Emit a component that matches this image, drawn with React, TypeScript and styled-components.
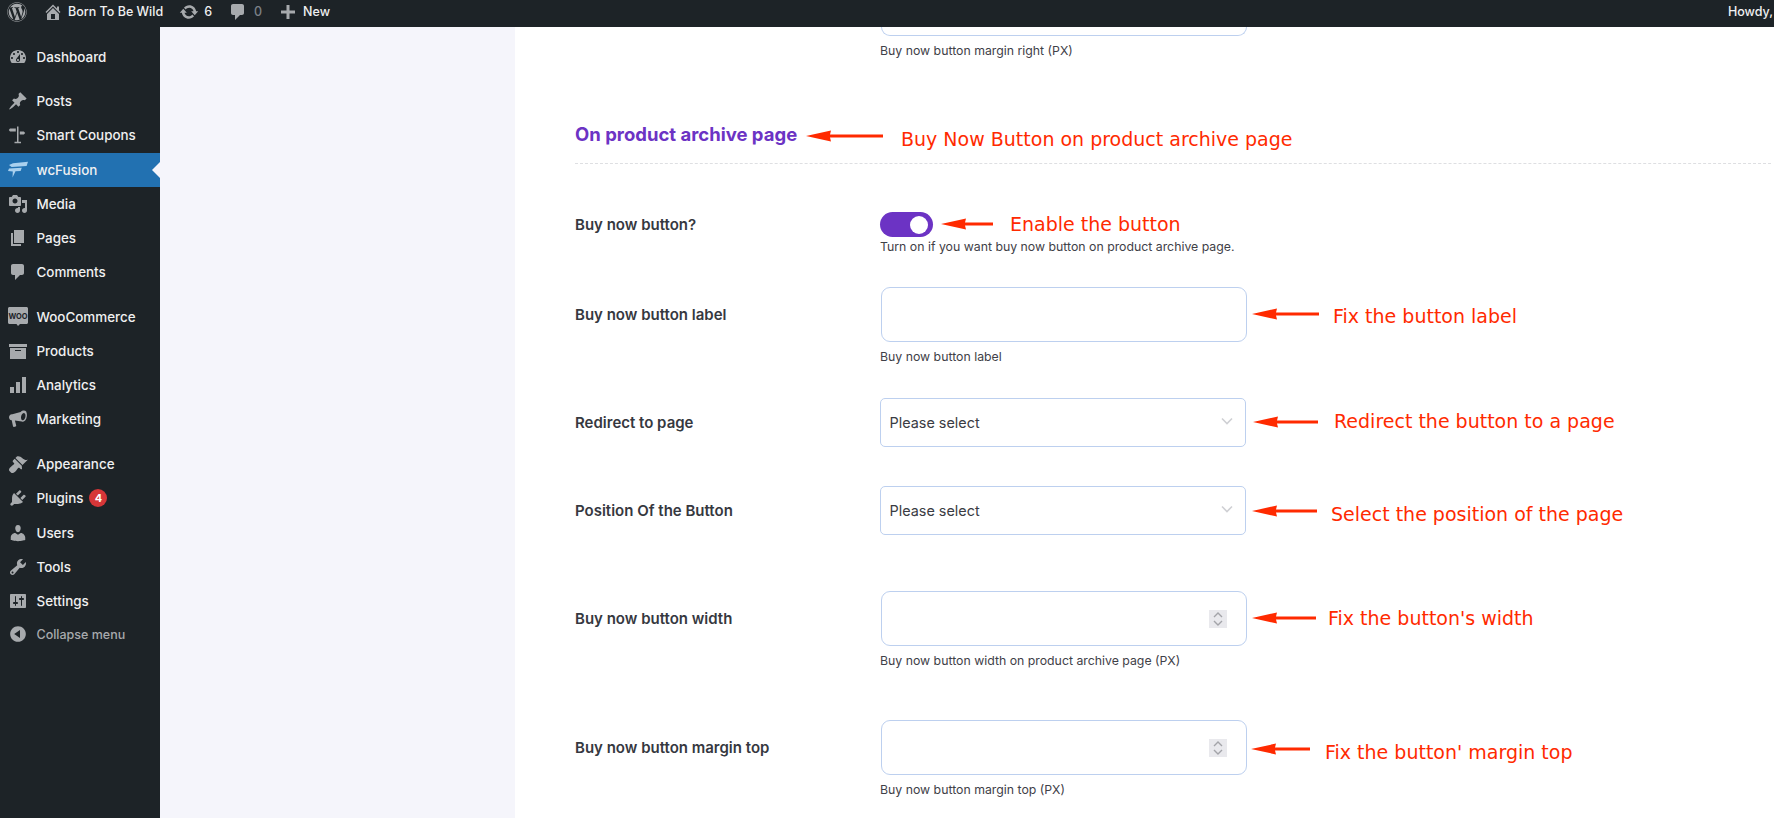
import React from 'react';
import styled, { createGlobalStyle } from 'styled-components';
import { FaWordpress } from 'react-icons/fa';

const GlobalStyle = createGlobalStyle`
  html, body {
    margin: 0;
    padding: 0;
    background: #fff;
  }
  * {
    box-sizing: border-box;
  }
`;

const Page = styled.div`
  width: 1774px;
  height: 818px;
  overflow: hidden;
  display: flex;
  flex-direction: column;
  font-family: Inter, "Liberation Sans", sans-serif;
`;

const AdminBar = styled.header`
  height: 27px;
  flex: none;
  background: #1d2327;
  color: #f0f0f1;
  display: flex;
  align-items: center;
  font-size: 12.5px;
  font-weight: 500;
  padding-left: 7px;
  padding-bottom: 4px;
`;

const BarIcon = styled.svg<{ $size?: number; $left: number }>`
  width: ${p => p.$size ?? 20}px;
  height: ${p => p.$size ?? 20}px;
  margin-left: ${p => p.$left}px;
  flex: none;
  fill: #a7aaad;
`;

const LogoSlot = styled.span`
  display: flex;
  color: #a7aaad;
  font-size: 20px;
`;

const BarText = styled.span<{ $left: number; $dim?: boolean }>`
  margin-left: ${p => p.$left}px;
  color: ${p => (p.$dim ? '#7b8086' : '#f0f0f1')};
  white-space: nowrap;
`;

const Howdy = styled.span`
  margin-left: auto;
  margin-right: 1px;
  white-space: nowrap;
`;

const Body = styled.div`
  flex: 1;
  display: flex;
  min-height: 0;
`;

const Sidebar = styled.nav`
  width: 160px;
  flex: none;
  background: #1d2327;
  padding-top: 12.5px;
`;

const MenuGroup = styled.ul`
  list-style: none;
  margin: 0 0 10.5px;
  padding: 0;
`;

const MenuItem = styled.li<{ $active?: boolean; $muted?: boolean }>`
  position: relative;
  height: ${p => (p.$muted ? 32 : 34.2)}px;
  display: flex;
  align-items: center;
  padding-left: 8px;
  gap: 8.5px;
  font-size: ${p => (p.$muted ? 12.5 : 13.4)}px;
  font-weight: 500;
  color: ${p => (p.$muted ? '#a7aaad' : '#f0f0f1')};
  background: ${p => (p.$active ? '#2271b1' : 'transparent')};

  ${p =>
    p.$active &&
    `&::after {
      content: '';
      position: absolute;
      right: 0;
      top: 50%;
      margin-top: -8px;
      border: 8px solid transparent;
      border-right-color: #f5f5fb;
      border-left: none;
    }`}
`;

const MenuIcon = styled.svg<{ $tint?: string }>`
  width: 20px;
  height: 20px;
  flex: none;
  fill: ${p => p.$tint ?? '#a7aaad'};
`;

const Badge = styled.span`
  width: 18px;
  height: 18px;
  border-radius: 50%;
  background: #d63638;
  color: #fff;
  font-size: 11px;
  font-weight: 700;
  display: flex;
  align-items: center;
  justify-content: center;
  margin-left: -2.5px;
`;

const Gutter = styled.div`
  width: 355px;
  flex: none;
  background: #f5f5fb;
`;

const Content = styled.main`
  flex: 1;
  background: #fff;
  padding-left: 60px;
  padding-right: 3px;
`;

const StubInput = styled.div`
  width: 366px;
  height: 9px;
  margin-left: 306px;
  border: 1px solid #bdd0ef;
  border-top: none;
  border-radius: 0 0 9px 9px;
`;

const Helper = styled.p<{ $top?: number }>`
  margin: ${p => p.$top ?? 7}px 0 0 305px;
  font-size: 12.3px;
  line-height: 16px;
  color: #3f4148;
`;

const HeadingRow = styled.div`
  margin-top: 63px;
  display: flex;
  align-items: center;
  height: 24px;
`;

const Heading = styled.h2`
  margin: 0;
  font-size: 18.5px;
  font-weight: 700;
  color: #6c33c4;
  width: 222px;
  white-space: nowrap;
`;

const Divider = styled.hr`
  margin: 17px 0 0;
  border: none;
  border-top: 1px dashed #dedfe2;
`;

const FormRow = styled.section<{ $top: number }>`
  margin-top: ${p => p.$top}px;
`;

const RowLine = styled.div`
  display: flex;
  align-items: center;
`;

const FieldLabel = styled.label`
  width: 305px;
  flex: none;
  font-size: 15px;
  font-weight: 600;
  color: #36383f;
`;

const TextBox = styled.div`
  width: 366px;
  height: 55px;
  margin-left: 1px;
  flex: none;
  border: 1px solid #bdd0ef;
  border-radius: 9px;
  display: flex;
  align-items: center;
  justify-content: flex-end;
  padding-right: 19px;
`;

const SelectBox = styled.div`
  width: 366px;
  height: 49px;
  flex: none;
  border: 1px solid #bdd0ef;
  border-radius: 5px;
  display: flex;
  align-items: center;
  justify-content: space-between;
  padding: 0 12px 0 8.5px;
  font-size: 14.4px;
  color: #3a3c43;
`;

const Chevron = styled.svg`
  width: 12px;
  height: 8px;
  fill: none;
  stroke: #cfd0d4;
  stroke-width: 1.6;
  margin-top: -4px;
`;

const Spinner = styled.div`
  width: 18px;
  height: 18px;
  background: #e9e9ed;
  display: flex;
  flex-direction: column;
  align-items: center;
  justify-content: center;
  gap: 2px;
`;

const SpinArrow = styled.svg`
  width: 10px;
  height: 6px;
  fill: none;
  stroke: #a3a4a9;
  stroke-width: 1.4;
`;

const Toggle = styled.div`
  width: 53px;
  height: 25px;
  flex: none;
  border-radius: 13px;
  background: #6c33c4;
  display: flex;
  align-items: center;
  justify-content: flex-end;
  padding-right: 5px;
`;

const Knob = styled.span`
  width: 18px;
  height: 18px;
  border-radius: 50%;
  background: #fff;
`;

const Note = styled.div<{ $left: number }>`
  display: flex;
  align-items: center;
  margin-left: ${p => p.$left}px;
`;

const Pointer = styled.svg<{ $shift: number }>`
  height: 12px;
  flex: none;
  fill: #ff2a00;
  transform: translateY(${p => p.$shift}px);
`;

const NoteText = styled.span<{ $left: number; $shift: number }>`
  margin-left: ${p => p.$left}px;
  transform: translateY(${p => p.$shift}px);
  font-family: "DejaVu Sans", Verdana, sans-serif;
  font-size: 19px;
  color: #ff2a00;
  white-space: nowrap;
`;

interface AnnotationProps {
  left: number;
  arrow: number;
  arrowShift: number;
  textLeft: number;
  textShift: number;
  children: React.ReactNode;
}

const Annotation = ({ left, arrow, arrowShift, textLeft, textShift, children }: AnnotationProps) => (
  <Note $left={left}>
    <Pointer $shift={arrowShift} width={arrow} viewBox={`0 0 ${arrow} 12`}>
      <path d={`M0 6 25 .5 24 4.5H${arrow}V7.5H24L25 11.5Z`} />
    </Pointer>
    <NoteText $left={textLeft} $shift={textShift}>{children}</NoteText>
  </Note>
);

const Select = () => (
  <SelectBox>
    Please select
    <Chevron viewBox="0 0 12 8"><path d="M1 1.5 6 6.5 11 1.5" /></Chevron>
  </SelectBox>
);

const NumberField = () => (
  <TextBox>
    <Spinner>
      <SpinArrow viewBox="0 0 10 6"><path d="M1 5 5 1 9 5" /></SpinArrow>
      <SpinArrow viewBox="0 0 10 6"><path d="M1 1 5 5 9 1" /></SpinArrow>
    </Spinner>
  </TextBox>
);

const dash = {
  home: 'M16 8.5l1.53 1.53-1.06 1.06L10 4.62l-6.47 6.47-1.06-1.06L10 2.5l4 4v-2h2v4zm-6-2.46l6 5.99V18H4v-5.97zM12 17v-5H8v5h4z',
  update: 'M10.2 3.28c3.53 0 6.43 2.61 6.92 6h2.08l-3.5 4-3.5-4h2.32c-.45-1.97-2.21-3.45-4.32-3.45-1.45 0-2.73.71-3.54 1.78L4.95 5.66C6.23 4.2 8.11 3.28 10.2 3.28zm-.4 13.44c-3.52 0-6.43-2.61-6.92-6H.8l3.5-4c1.17 1.33 2.33 2.67 3.5 4H5.48c.45 1.97 2.21 3.45 4.32 3.45 1.45 0 2.73-.71 3.54-1.78l1.71 1.95c-1.28 1.46-3.15 2.38-5.25 2.38z',
  comment: 'M5 2h9c1.1 0 2 .9 2 2v7c0 1.1-.9 2-2 2h-2l-5 5v-5H5c-1.1 0-2-.9-2-2V4c0-1.1.9-2 2-2z',
  plus: 'M17 8.5v3h-5.5V17h-3v-5.5H3v-3h5.5V3h3v5.5z',
  dashboard: 'M3.76 16h12.48c1.1-1.37 1.76-3.11 1.76-5 0-4.42-3.58-8-8-8s-8 3.58-8 8c0 1.89.66 3.63 1.76 5zM10 4c.55 0 1 .45 1 1s-.45 1-1 1-1-.45-1-1 .45-1 1-1zM6 6c.55 0 1 .45 1 1s-.45 1-1 1-1-.45-1-1 .45-1 1-1zm8 0c.55 0 1 .45 1 1s-.45 1-1 1-1-.45-1-1 .45-1 1-1zm-5.37 5.55L12 7v6c0 1.1-.9 2-2 2s-2-.9-2-2c0-.57.24-1.08.63-1.45zM4 10c.55 0 1 .45 1 1s-.45 1-1 1-1-.45-1-1 .45-1 1-1zm12 0c.55 0 1 .45 1 1s-.45 1-1 1-1-.45-1-1 .45-1 1-1zm-5 3c0-.55-.45-1-1-1s-1 .45-1 1 .45 1 1 1 1-.45 1-1z',
  post: 'M10.44 3.02l1.82-1.82 6.36 6.35-1.83 1.82c-1.05-.68-2.48-.57-3.41.36l-.75.75c-.92.93-1.04 2.35-.35 3.41l-1.83 1.82-2.41-2.41-2.8 2.79c-.42.42-3.38 2.71-3.8 2.29s1.86-3.39 2.28-3.81l2.79-2.79L4.1 9.36l1.83-1.82c1.05.69 2.48.57 3.4-.36l.75-.75c.93-.92 1.05-2.35.36-3.41z',
  signpost: 'M9 1.500h1.500V17H9zM2 3.500H7.800V6.500H2L.8 5zM11.800 6.500H15.800L17.200 8 15.800 9.500H11.800zM6.500 16.800h6.500V18.300H6.500z',
  fusion: 'M5 3.200 20 1.800 18.600 6 3.600 7 1 5zM1 8.600 13.800 7.800 12.600 11 7.500 11.300 4.500 17.600 4.800 11.400 0 11z',
  media: 'M13 11V4c0-.55-.45-1-1-1h-1.670L9 1H5L3.670 3H2c-.55 0-1 .45-1 1v7c0 .55.45 1 1 1h10c.55 0 1-.45 1-1zM7 4.500c1.380 0 2.500 1.120 2.500 2.500S8.380 9.500 7 9.500 4.500 8.380 4.500 7 5.620 4.500 7 4.500zM14 6h5v10.500c0 1.380-1.120 2.500-2.500 2.500S14 17.880 14 16.500s1.120-2.500 2.500-2.500c.17 0 .34.02.5.05V9h-3V6zm-4 8.050V13h2v3.500c0 1.380-1.120 2.500-2.500 2.500S7 17.880 7 16.500 8.120 14 9.500 14c.17 0 .34.02.5.05z',
  page: 'M6 15V2h10v13H6zm-1 1h8v2H3V5h2v11z',
  archive: 'M19 3v3H1V3h18zM2 7h16v11H2V7zm11 3V9H7v1h6z',
  bars: 'M18 18V2h-4v16h4zm-6 0V7H8v11h4zm-6 0v-6H2v6h4z',
  megaphone: 'M18.200 2.600c1.300 2.600.9 6.600-1 9-1 1.200-2.400 1.300-3.400.8L6.900 11.400l1.300 5.200c.1.5-.2.9-.7 1l-1.500.3c-.4.1-.9-.2-1-.7L3.700 11.200 2.400 10.900C1.300 10.300.7 8.700 1.200 7.300 1.700 5.900 2.900 4.900 4.300 5.200L12.600 3c1.800-1.700 4.400-1.900 5.600-.4zM16 4c-1.300 0-2.500 1.500-2.900 3.400-.4 1.900.3 3.600 1.500 3.800 1.200.2 2.400-1.300 2.800-3.200C17.800 6 17.200 4.200 16 4z',
  brush: 'M14.48 11.06L7.41 3.99l1.5-1.5c.5-.56 2.3-.47 3.51.32 1.21.8 1.43 1.28 2.91 2.1 1.18.64 2.45 1.26 4.45.85zm-.71.71L6.7 4.7 4.93 6.47c-.39.39-.39 1.02 0 1.41l1.06 1.06c.39.39.39 1.03 0 1.42-.6.6-1.43 1.11-2.21 1.69-.35.26-.7.53-1.01.84C1.43 13.71.6 15.3 1.2 16.8l2 2c1.5.6 3.1-.23 4.42-1.57.31-.31.58-.66.84-1.01.58-.78 1.09-1.61 1.69-2.21.39-.39 1.02-.39 1.41 0l1.06 1.06c.39.39 1.02.39 1.41 0z',
  plugin: 'M13.11 4.36L9.87 7.6 8 5.73l3.24-3.24c.35-.34 1.05-.2 1.56.32.52.51.66 1.21.31 1.55zm-8 1.77l.91-1.12 9.01 9.01-1.19.84c-.71.71-2.63 1.16-3.82 1.16H6.14L4.9 17.26c-.59.59-1.54.59-2.12 0-.59-.58-.59-1.53 0-2.12l1.24-1.24v-3.88c0-1.13.4-3.19 1.09-3.89zm7.26 3.97l3.24-3.24c.34-.35 1.04-.21 1.55.31.52.51.66 1.21.31 1.55l-3.24 3.25z',
  users: 'M10 9.25c-2.27 0-2.73-3.44-2.73-3.44C7 4.02 7.82 2 9.97 2c2.16 0 2.98 2.02 2.71 3.81 0 0-.41 3.44-2.68 3.44zm0 2.57L12.72 10c2.39 0 4.52 2.33 4.52 4.53v2.49s-3.65 1.13-7.24 1.13c-3.65 0-7.24-1.13-7.24-1.13v-2.49c0-2.25 1.94-4.48 4.47-4.48z',
  tools: 'M16.68 9.77c-1.34 1.34-3.3 1.67-4.95.99l-5.41 6.52c-.99.99-2.59.99-3.58 0s-.99-2.59 0-3.57l6.52-5.42c-.68-1.65-.35-3.61.99-4.95 1.28-1.28 3.12-1.62 4.72-1.06l-2.89 2.89 2.82 2.82 2.86-2.87c.53 1.58.18 3.39-1.08 4.65zM3.81 16.21c.4.39 1.04.39 1.43 0 .4-.4.4-1.04 0-1.43-.39-.4-1.03-.4-1.43 0-.39.39-.39 1.03 0 1.43z',
  settings: 'M18 16V4c0-.55-.45-1-1-1H3c-.55 0-1 .45-1 1v12c0 .55.45 1 1 1h14c.55 0 1-.45 1-1zM8 11h1c.55 0 1 .45 1 1s-.45 1-1 1H8v1.500c0 .28-.22.5-.5.5s-.5-.22-.5-.5V13H6c-.55 0-1-.45-1-1s.45-1 1-1h1V5.500c0-.28.22-.5.5-.5s.5.22.5.5V11zm5-2h-1c-.55 0-1-.45-1-1s.45-1 1-1h1V5.500c0-.28.22-.5.5-.5s.5.22.5.5V7h1c.55 0 1 .45 1 1s-.45 1-1 1h-1v5.500c0 .28-.22.5-.5.5s-.5-.22-.5-.5V9z',
  collapse: 'M10 2.160c4.330 0 7.840 3.510 7.840 7.840s-3.510 7.840-7.840 7.840S2.160 14.330 2.160 10 5.710 2.160 10 2.160zm2 11.720V6.120L6.180 9.970z',
};

const Icon = ({ d, tint }: { d: string; tint?: string }) => (
  <MenuIcon viewBox="0 0 20 20" $tint={tint}><path d={d} /></MenuIcon>
);

const WooIcon = () => (
  <MenuIcon viewBox="0 0 20 20">
    <path d="M1.500 0h17c.8 0 1.500.7 1.500 1.500v14c0 .8-.7 1.500-1.500 1.500H12l-2 2-1.500-2H1.500C.7 17 0 16.300 0 15.500V1.500C0 .7.700 0 1.500 0z" />
    <text x="10" y="11.500" textAnchor="middle" fontSize="7.500" fontWeight="700" fill="#1d2327" fontFamily="Inter, sans-serif">WOO</text>
  </MenuIcon>
);

export default function App() {
  return (
    <>
      <GlobalStyle />
      <Page>
        <AdminBar>
          <LogoSlot><FaWordpress /></LogoSlot>
          <BarIcon $left={15.5} viewBox="0 0 20 20"><path d={dash.home} /></BarIcon>
          <BarText $left={5.5}>Born To Be Wild</BarText>
          <BarIcon $left={16} viewBox="0 0 20 20"><path d={dash.update} /></BarIcon>
          <BarText $left={5}>6</BarText>
          <BarIcon $left={16} viewBox="0 0 20 20"><path d={dash.comment} /></BarIcon>
          <BarText $left={6} $dim>0</BarText>
          <BarIcon $left={16} viewBox="0 0 20 20"><path d={dash.plus} /></BarIcon>
          <BarText $left={5}>New</BarText>
          <Howdy>Howdy,</Howdy>
        </AdminBar>
        <Body>
          <Sidebar>
            <MenuGroup>
              <MenuItem><Icon d={dash.dashboard} />Dashboard</MenuItem>
            </MenuGroup>
            <MenuGroup>
              <MenuItem><Icon d={dash.post} />Posts</MenuItem>
              <MenuItem><Icon d={dash.signpost} />Smart Coupons</MenuItem>
              <MenuItem $active><Icon d={dash.fusion} tint="#a9d0ee" />wcFusion</MenuItem>
              <MenuItem><Icon d={dash.media} />Media</MenuItem>
              <MenuItem><Icon d={dash.page} />Pages</MenuItem>
              <MenuItem><Icon d={dash.comment} />Comments</MenuItem>
            </MenuGroup>
            <MenuGroup>
              <MenuItem><WooIcon />WooCommerce</MenuItem>
              <MenuItem><Icon d={dash.archive} />Products</MenuItem>
              <MenuItem><Icon d={dash.bars} />Analytics</MenuItem>
              <MenuItem><Icon d={dash.megaphone} />Marketing</MenuItem>
            </MenuGroup>
            <MenuGroup>
              <MenuItem><Icon d={dash.brush} />Appearance</MenuItem>
              <MenuItem><Icon d={dash.plugin} />Plugins<Badge>4</Badge></MenuItem>
              <MenuItem><Icon d={dash.users} />Users</MenuItem>
              <MenuItem><Icon d={dash.tools} />Tools</MenuItem>
              <MenuItem><Icon d={dash.settings} />Settings</MenuItem>
              <MenuItem $muted><Icon d={dash.collapse} />Collapse menu</MenuItem>
            </MenuGroup>
          </Sidebar>
          <Gutter />
          <Content>
            <StubInput />
            <Helper>Buy now button margin right (PX)</Helper>

            <HeadingRow>
              <Heading>On product archive page</Heading>
              <Annotation left={9} arrow={77} arrowShift={2} textLeft={18} textShift={5}>
                Buy Now Button on product archive page
              </Annotation>
            </HeadingRow>
            <Divider />

            <FormRow $top={48}>
              <RowLine>
                <FieldLabel>Buy now button?</FieldLabel>
                <Toggle><Knob /></Toggle>
                <Annotation left={8} arrow={52} arrowShift={-1} textLeft={17} textShift={-1}>
                  Enable the button
                </Annotation>
              </RowLine>
              <Helper $top={2}>Turn on if you want buy now button on product archive page.</Helper>
            </FormRow>

            <FormRow $top={32}>
              <RowLine>
                <FieldLabel>Buy now button label</FieldLabel>
                <TextBox />
                <Annotation left={5} arrow={67} arrowShift={-1} textLeft={14} textShift={1}>
                  Fix the button label
                </Annotation>
              </RowLine>
              <Helper>Buy now button label</Helper>
            </FormRow>

            <FormRow $top={33}>
              <RowLine>
                <FieldLabel>Redirect to page</FieldLabel>
                <Select />
                <Annotation left={7} arrow={65} arrowShift={-1} textLeft={16} textShift={-2}>
                  Redirect the button to a page
                </Annotation>
              </RowLine>
            </FormRow>

            <FormRow $top={39}>
              <RowLine>
                <FieldLabel>Position Of the Button</FieldLabel>
                <Select />
                <Annotation left={6} arrow={65} arrowShift={0} textLeft={14} textShift={3}>
                  Select the position of the page
                </Annotation>
              </RowLine>
            </FormRow>

            <FormRow $top={56}>
              <RowLine>
                <FieldLabel>Buy now button width</FieldLabel>
                <NumberField />
                <Annotation left={5} arrow={64} arrowShift={-1} textLeft={12} textShift={-1}>
                  Fix the button's width
                </Annotation>
              </RowLine>
              <Helper>Buy now button width on product archive page (PX)</Helper>
            </FormRow>

            <FormRow $top={51}>
              <RowLine>
                <FieldLabel>Buy now button margin top</FieldLabel>
                <NumberField />
                <Annotation left={4} arrow={59} arrowShift={1} textLeft={15} textShift={4}>
                  Fix the button' margin top
                </Annotation>
              </RowLine>
              <Helper>Buy now button margin top (PX)</Helper>
            </FormRow>
          </Content>
        </Body>
      </Page>
    </>
  );
}
